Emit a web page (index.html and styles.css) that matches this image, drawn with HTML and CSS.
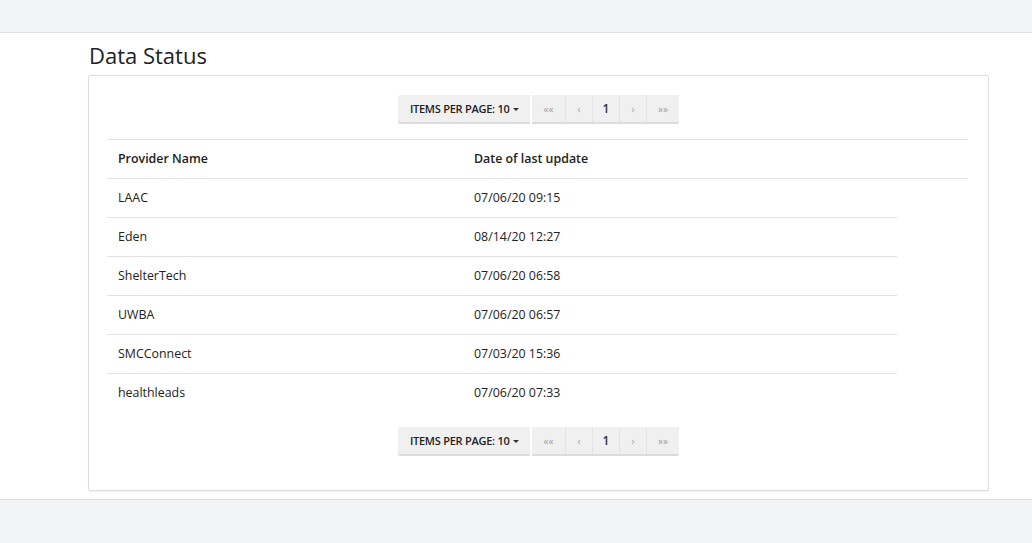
FILE: index.html
```html
<!DOCTYPE html>
<html>
<head>
<meta charset="utf-8">
<link rel="stylesheet" href="styles.css">
</head>
<body>
<div class="topbar"></div>
<main class="main">
  <h1 class="title">Data Status</h1>
  <section class="card">
    <div class="pager">
      <button class="btn per-page">ITEMS PER PAGE: 10 <span class="caret"></span></button>
      <div class="pages">
        <button class="btn pg small">&laquo;&laquo;</button>
        <button class="btn pg small">&lsaquo;</button>
        <button class="btn pg num">1</button>
        <button class="btn pg small">&rsaquo;</button>
        <button class="btn pg small">&raquo;&raquo;</button>
      </div>
    </div>
    <div class="table">
      <div class="row head"><div class="c1">Provider Name</div><div class="c2">Date of last update</div></div>
      <div class="row"><div class="c1">LAAC</div><div class="c2">07/06/20 09:15</div></div>
      <div class="row"><div class="c1">Eden</div><div class="c2">08/14/20 12:27</div></div>
      <div class="row"><div class="c1">ShelterTech</div><div class="c2">07/06/20 06:58</div></div>
      <div class="row"><div class="c1">UWBA</div><div class="c2">07/06/20 06:57</div></div>
      <div class="row"><div class="c1">SMCConnect</div><div class="c2">07/03/20 15:36</div></div>
      <div class="row last"><div class="c1">healthleads</div><div class="c2">07/06/20 07:33</div></div>
    </div>
    <div class="pager">
      <button class="btn per-page">ITEMS PER PAGE: 10 <span class="caret"></span></button>
      <div class="pages">
        <button class="btn pg small">&laquo;&laquo;</button>
        <button class="btn pg small">&lsaquo;</button>
        <button class="btn pg num">1</button>
        <button class="btn pg small">&rsaquo;</button>
        <button class="btn pg small">&raquo;&raquo;</button>
      </div>
    </div>
  </section>
</main>
<div class="footer"></div>
</body>
</html>
```

FILE: styles.css
```css
* { box-sizing: border-box; }
html, body { margin: 0; padding: 0; }
body {
  font-family: "Open Sans", "Liberation Sans", sans-serif;
  color: #222;
  background: #fff;
  height: 543px;
  overflow: hidden;
}
.topbar {
  height: 33px;
  background: #f3f4f6;
  border-bottom: 1px solid #dedede;
}
.main {
  height: 467px;
  padding: 7px 44px 0 88px;
  border-bottom: 1px solid #dedede;
}
.title {
  margin: 0 0 0 1px;
  font-size: 22px;
  font-weight: 400;
  line-height: 30px;
  height: 35px;
  color: #222;
}
.card {
  width: 901px;
  height: 416px;
  border: 1px solid #dcdcdc;
  border-radius: 2px;
  padding: 19px 19px 0 18px;
  box-shadow: 0 1px 1px rgba(0,0,0,0.06);
}
.pager {
  display: flex;
  justify-content: center;
  align-items: flex-start;
  gap: 2px;
  height: 30px;
  margin-left: 1px;
}
.btn {
  font-family: "Open Sans", "Liberation Sans", sans-serif;
  border: 0;
  margin: 0;
  background: #f0f0f0;
  height: 27px;
  box-shadow: 0 2px 0 #dcdcdc;
  color: #222;
  padding: 0;
  -webkit-font-smoothing: antialiased;
}
.per-page {
  width: 132px;
  font-size: 11px;
  font-weight: 600;
  letter-spacing: -0.25px;
  padding-left: 1px;
  border-radius: 2px 0 0 2px;
}
.caret {
  display: inline-block;
  width: 0; height: 0;
  border-left: 3px solid transparent;
  border-right: 3px solid transparent;
  border-top: 3px solid #333;
  vertical-align: 2px;
  margin-left: 1px;
}
.pages {
  display: flex;
  box-shadow: 0 2px 0 #dcdcdc;
  border-radius: 0 2px 2px 0;
  height: 27px;
}
.pg {
  box-shadow: none;
  border-left: 1px solid #e4e4e4;
}
.pg:first-child { border-left: 0; }
.small {
  font-size: 10px;
  color: #a0a0a0;
  width: 27px;
}
.pg:first-child, .pg:last-child { width: 33px; }
.num {
  width: 27px;
  font-size: 12px;
  font-weight: 600;
  color: #333;
}
.table {
  margin-top: 14px;
  margin-bottom: 14px;
  font-size: 12.4px;
}
.row {
  display: flex;
  height: 39px;
  align-items: center;
  padding-bottom: 2px;
  width: 790px;
  border-bottom: 1px solid #e2e2e6;
}
.row.head {
  width: 861px;
  border-top: 1px solid #e2e2e6;
  font-weight: 600;
  height: 40px;
}
.row.last { border-bottom: 0; }
.c1 { width: 356px; padding-left: 11px; }
.c2 { padding-left: 11px; }
.footer {
  height: 43px;
  background: #f3f4f6;
}
```
